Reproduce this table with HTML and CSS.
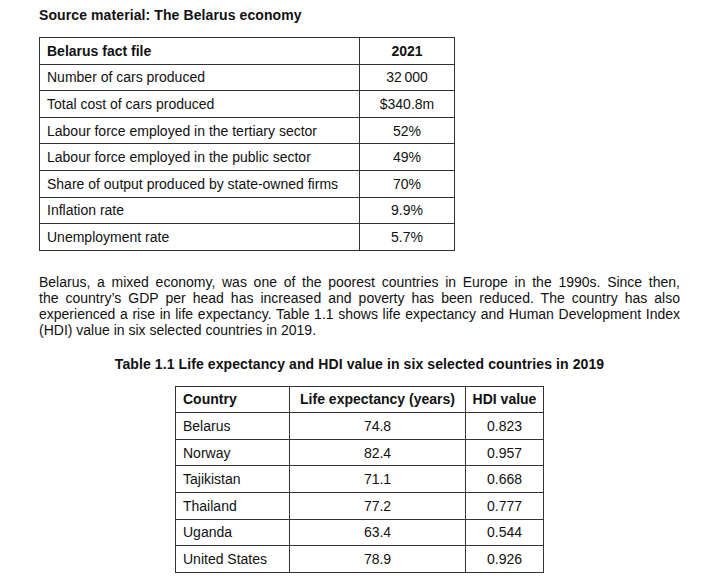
FILE: index.html
```html
<!DOCTYPE html>
<html lang="en">
<head>
<meta charset="utf-8">
<title>Source material: The Belarus economy</title>
<link rel="stylesheet" href="styles.css">
</head>
<body>
<main class="page">
  <h1 class="heading">Source material: The Belarus economy</h1>
  <table class="fact">
    <colgroup><col class="fact-c1"><col class="fact-c2"></colgroup>
    <thead>
      <tr><th class="label">Belarus fact file</th><th class="val">2021</th></tr>
    </thead>
    <tbody>
      <tr><td class="label">Number of cars produced</td><td class="val">32&#8201;000</td></tr>
      <tr><td class="label">Total cost of cars produced</td><td class="val">$340.8m</td></tr>
      <tr><td class="label">Labour force employed in the tertiary sector</td><td class="val">52%</td></tr>
      <tr><td class="label">Labour force employed in the public sector</td><td class="val">49%</td></tr>
      <tr><td class="label">Share of output produced by state-owned firms</td><td class="val">70%</td></tr>
      <tr><td class="label">Inflation rate</td><td class="val">9.9%</td></tr>
      <tr><td class="label">Unemployment rate</td><td class="val">5.7%</td></tr>
    </tbody>
  </table>
  <p class="para"><span class="line">Belarus, a mixed economy, was one of the poorest countries in Europe in the 1990s. Since then,</span> <span class="line">the country’s GDP per head has increased and poverty has been reduced. The country has also</span> <span class="line">experienced a rise in life expectancy. Table 1.1 shows life expectancy and Human Development Index</span> <span class="line last">(HDI) value in six selected countries in 2019.</span></p>
  <h2 class="caption">Table 1.1 Life expectancy and HDI value in six selected countries in 2019</h2>
  <table class="life">
    <colgroup><col class="life-c1"><col class="life-c2"><col class="life-c3"></colgroup>
    <thead>
      <tr><th class="c1">Country</th><th class="c2">Life expectancy (years)</th><th class="c3">HDI value</th></tr>
    </thead>
    <tbody>
      <tr><td class="c1">Belarus</td><td class="c2">74.8</td><td class="c3">0.823</td></tr>
      <tr><td class="c1">Norway</td><td class="c2">82.4</td><td class="c3">0.957</td></tr>
      <tr><td class="c1">Tajikistan</td><td class="c2">71.1</td><td class="c3">0.668</td></tr>
      <tr><td class="c1">Thailand</td><td class="c2">77.2</td><td class="c3">0.777</td></tr>
      <tr><td class="c1">Uganda</td><td class="c2">63.4</td><td class="c3">0.544</td></tr>
      <tr><td class="c1">United States</td><td class="c2">78.9</td><td class="c3">0.926</td></tr>
    </tbody>
  </table>
</main>
</body>
</html>
```
FILE: styles.css
```css
html, body {
  margin: 0;
  padding: 0;
  background: #fff;
}
body {
  font-family: "Liberation Sans", Arial, sans-serif;
  color: #111;
}
.page {
  width: 641px;
  padding: 6px 0 0 39px;
  display: flex;
  flex-direction: column;
}
.heading {
  font-size: 14px;
  font-weight: bold;
  line-height: 18px;
  margin: 0 0 13px 0;
  letter-spacing: 0.1px;
}
table {
  border-collapse: collapse;
  table-layout: fixed;
  font-size: 14px;
}
th, td {
  border: 1px solid #333;
  height: 25.6px;
  padding: 0 7px;
  line-height: 16px;
  vertical-align: middle;
  white-space: nowrap;
}
th {
  font-weight: bold;
}
.fact {
  width: 416px;
}
.fact-c1 {
  width: 320px;
}
.fact .label {
  text-align: left;
}
.fact .val {
  text-align: center;
}
.para {
  font-size: 14px;
  line-height: 16.2px;
  margin: 23px 0 0 0;
}
.line {
  display: block;
  text-align: justify;
  text-align-last: justify;
  white-space: nowrap;
}
.line.last {
  text-align: left;
  text-align-last: left;
}
.caption {
  font-size: 14px;
  font-weight: bold;
  line-height: 16px;
  text-align: center;
  margin: 17px 0 14px 0;
  letter-spacing: 0.1px;
}
.life {
  align-self: center;
  width: 369px;
}
.life-c1 {
  width: 114px;
}
.life-c2 {
  width: 176px;
}
.life .c1 {
  text-align: left;
}
.life .c2,
.life .c3 {
  text-align: center;
}
.life th.c2,
.life th.c3 {
  padding: 0 4px;
}
```
